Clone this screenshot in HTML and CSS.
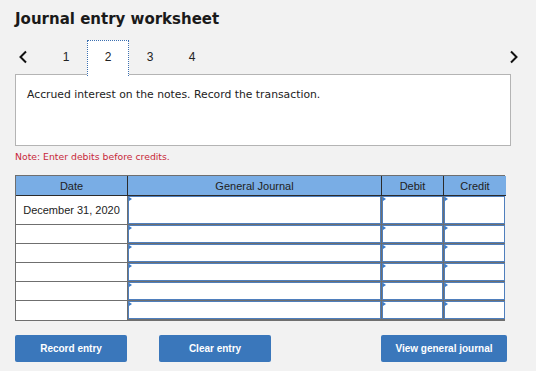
FILE: index.html
```html
<!DOCTYPE html>
<html>
<head>
<meta charset="utf-8">
<link rel="stylesheet" href="styles.css">
</head>
<body>
<div class="page">
  <h1 class="title">Journal entry worksheet</h1>
  <div class="tabs">
    <span class="arrow"><svg width="10" height="14" viewBox="0 0 10 14"><path d="M8 1.5 L2.5 7 L8 12.5" fill="none" stroke="#111" stroke-width="2"/></svg></span>
    <span class="tab">1</span>
    <span class="tab active">2</span>
    <span class="tab">3</span>
    <span class="tab">4</span>
    <span class="spacer"></span>
    <span class="arrow arrow-right"><svg width="10" height="14" viewBox="0 0 10 14"><path d="M2 1.5 L7.5 7 L2 12.5" fill="none" stroke="#111" stroke-width="2"/></svg></span>
  </div>
  <div class="prompt">Accrued interest on the notes. Record the transaction.</div>
  <p class="note">Note: Enter debits before credits.</p>
  <div class="journal">
    <div class="hd">Date</div>
    <div class="hd">General Journal</div>
    <div class="hd">Debit</div>
    <div class="hd">Credit</div>

    <div class="date first">December 31, 2020</div>
    <div class="in first"></div><div class="in first"></div><div class="in first"></div>

    <div class="date"></div><div class="in"></div><div class="in"></div><div class="in"></div>
    <div class="date"></div><div class="in"></div><div class="in"></div><div class="in"></div>
    <div class="date"></div><div class="in"></div><div class="in"></div><div class="in"></div>
    <div class="date"></div><div class="in"></div><div class="in"></div><div class="in"></div>
    <div class="date"></div><div class="in"></div><div class="in"></div><div class="in"></div>
  </div>
  <div class="buttons">
    <button class="btn">Record entry</button>
    <button class="btn">Clear entry</button>
    <span class="spacer"></span>
    <button class="btn btn-wide">View general journal</button>
  </div>
</div>
</body>
</html>
```

FILE: styles.css
```css
html, body {
  margin: 0;
  padding: 0;
  background: #f2f2f2;
}
.page {
  width: 536px;
  height: 371px;
  box-sizing: border-box;
  padding: 8px 0 0 15px;
  font-family: "DejaVu Sans", Verdana, sans-serif;
  color: #111;
}
.title {
  margin: 0;
  font-size: 15px;
  line-height: 22px;
  font-weight: bold;
  color: #1a1a1a;
}
.tabs {
  display: flex;
  align-items: stretch;
  width: 504px;
  height: 36px;
  margin-top: 10px;
  margin-bottom: -2px;
  position: relative;
  z-index: 1;
}
.arrow {
  width: 30px;
  display: flex;
  align-items: center;
  padding-left: 3px;
  box-sizing: border-box;
  padding-bottom: 3px;
}
.arrow-right {
  width: 10px;
  padding-left: 0;
}
.tab {
  width: 42px;
  box-sizing: border-box;
  display: flex;
  align-items: center;
  justify-content: center;
  font-family: "Liberation Sans", Arial, sans-serif;
  font-size: 12px;
  color: #222;
  padding-bottom: 3px;
}
.tab.active {
  background: #fff;
  border: 1px dotted #3b6fb0;
  border-bottom: none;
}
.spacer {
  flex: 1;
}
.prompt {
  width: 496px;
  height: 72px;
  box-sizing: border-box;
  background: #fff;
  border: 1px solid #b4b4b4;
  padding: 13px 11px;
  font-size: 10.8px;
  color: #222;
}
.note {
  margin: 6px 0 0;
  font-size: 9.3px;
  line-height: 10px;
  color: #c8283a;
}
.journal {
  margin-top: 13px;
  width: 490px;
  display: grid;
  grid-template-columns: 112px 254px 62px 62px;
  grid-template-rows: 20px 29px repeat(5, 19px);
  background: #6f6f6f;
  border: 1px solid #6f6f6f;
  box-sizing: border-box;
  font-family: "Liberation Sans", Arial, sans-serif;
}
.hd {
  background: #79ade5;
  border-right: 1px solid #2b2b2b;
  border-bottom: 1px solid #2b2b2b;
  display: flex;
  align-items: center;
  justify-content: center;
  font-size: 11px;
  color: #222;
}
.hd:nth-child(4) {
  border-right: none;
}
.date {
  background: #fff;
  border-right: 1px solid #6f6f6f;
  border-bottom: 1px solid #6f6f6f;
  display: flex;
  align-items: center;
  justify-content: center;
  font-size: 11px;
  color: #222;
}
.date:nth-last-child(4) {
  border-bottom: none;
}
.in {
  background: #fff;
  border: 1px solid #4f7fbd;
  margin: 0 1px 1px 0;
  position: relative;
}
.in::before {
  content: "";
  position: absolute;
  left: 0;
  top: 0;
  border-left: 3px solid #3a7bc8;
  border-top: 2.5px solid transparent;
  border-bottom: 2.5px solid transparent;
}
.buttons {
  display: flex;
  margin-top: 14px;
  width: 492px;
  gap: 32px;
}
.btn {
  width: 112px;
  height: 27px;
  background: #3a77bb;
  color: #fff;
  border: none;
  border-radius: 2px;
  font-family: "Liberation Sans", Arial, sans-serif;
  font-weight: bold;
  font-size: 10px;
  padding: 0;
}
.btn-wide {
  width: 126px;
}
```
